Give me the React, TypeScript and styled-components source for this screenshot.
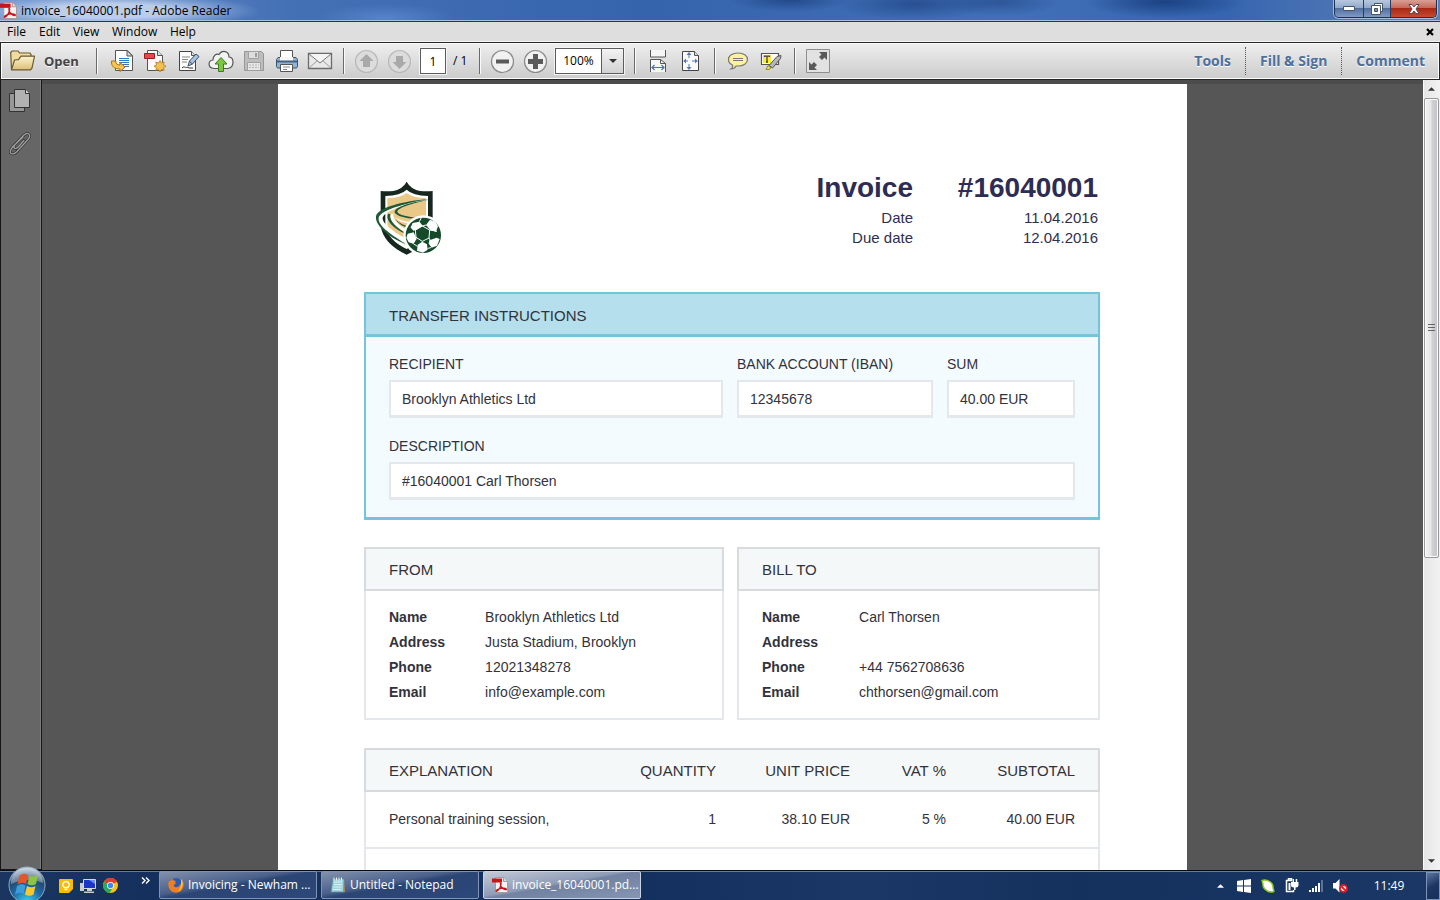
import React from "react";
import styled, { createGlobalStyle, css } from "styled-components";

const uiFont = `"Segoe UI", "Open Sans", "Noto Sans", sans-serif`;
const docFont = `"Liberation Sans", Arial, Helvetica, sans-serif`;

const GlobalStyle = createGlobalStyle`
  *, *::before, *::after { box-sizing: border-box; }
  body { margin: 0; background: #565656; }
  button, input { font: inherit; color: inherit; margin: 0; }
  button { padding: 0; border: 0; background: none; cursor: default; }
  svg { display: block; flex: none; }
`;

/* ---------- window frame ---------- */

const Desktop = styled.div`
  display: flex;
  flex-direction: column;
  height: 100vh;
  overflow: hidden;
  font: 12px/16px ${uiFont};
  color: #000;
`;

const TitleBar = styled.header`
  display: flex;
  align-items: flex-start;
  flex: none;
  height: 22px;
  padding-right: 3px;
  border-bottom: 1px solid #1f3660;
  box-shadow: inset 0 -1px #a9bfe2;
  background:
    radial-gradient(ellipse 150px 18px at 110px 11px, rgba(205, 218, 240, 0.85) 40%, rgba(150, 180, 225, 0.5) 75%, transparent),
    radial-gradient(ellipse 70px 14px at 385px 18px, rgba(95, 140, 210, 0.7), transparent),
    radial-gradient(ellipse 60px 12px at 790px 0, rgba(25, 60, 120, 0.7), transparent),
    radial-gradient(ellipse 80px 16px at 915px 4px, rgba(25, 60, 120, 0.6), transparent),
    radial-gradient(ellipse 60px 14px at 1000px 2px, rgba(25, 60, 120, 0.5), transparent),
    radial-gradient(ellipse 80px 16px at 1165px 2px, rgba(15, 50, 110, 0.7), transparent),
    linear-gradient(90deg, #6f93cd, #4470b5 20%, #3564ad 45%, #4170b8 70%, #3565b0 85%, #5f80b5);
`;

const WindowTitle = styled.h1`
  display: flex;
  align-items: center;
  gap: 4px;
  flex: 1;
  height: 21px;
  margin: 0;
  font-size: 12px;
  font-weight: 400;
`;

const Caption = styled.div`
  display: flex;
  height: 18px;
  border: 1px solid #1f2f4f;
  border-top: 0;
  border-radius: 0 0 5px 5px;
  box-shadow: 0 0 0 1px rgba(210, 225, 245, 0.65);
  overflow: hidden;
`;

const CaptionButton = styled.button<{ $w: number; $close?: boolean }>`
  display: flex;
  align-items: center;
  justify-content: center;
  width: ${(p) => p.$w}px;
  background: ${(p) =>
    p.$close
      ? "linear-gradient(#d9a095, #c56a58 45%, #a82a15 50%, #c8492f)"
      : "linear-gradient(#b8c8df, #93a9cb 45%, #53709f 50%, #7f9ac5)"};
  & + & { border-left: 1px solid #2b3c5e; }
`;

const MenuBar = styled.nav`
  display: flex;
  align-items: center;
  flex: none;
  height: 20px;
  padding-right: 6px;
  background: #dedede;
  border-bottom: 1px solid #f6f6f6;
`;

const MenuItem = styled.button<{ $w: number }>`
  width: ${(p) => p.$w}px;
  height: 19px;
  padding-left: 7px;
  text-align: left;
`;

const CloseDocument = styled.button`
  margin-left: auto;
`;

/* ---------- toolbar ---------- */

const Toolbar = styled.div`
  display: flex;
  align-items: center;
  flex: none;
  height: 38px;
  border: 1px solid #262626;
  box-shadow: inset 0 0 0 1px #fbfbfb;
  background: linear-gradient(#efefef, #cbcbcb);
`;

const OpenButton = styled.button`
  display: flex;
  align-items: center;
  gap: 8px;
  width: 88px;
  height: 34px;
  padding-left: 9px;
  font: 700 13px/16px "Open Sans", sans-serif;
  color: #444;
  text-shadow: 0 1px #fff;
`;

const Separator = styled.span`
  width: 2px;
  height: 26px;
  margin: 0 5px 0 7px;
  background: linear-gradient(90deg, #6a6a6a 50%, #fafafa 50%);
`;

const Tools = styled.div<{ $lead?: number }>`
  display: flex;
  align-items: center;
  padding-left: ${(p) => p.$lead ?? 0}px;
`;

const Tool = styled.button`
  display: flex;
  align-items: center;
  justify-content: center;
  width: 33px;
  height: 34px;
`;

const PageNumber = styled.input`
  width: 26px;
  height: 26px;
  margin-left: 4px;
  padding: 0;
  border: 1px solid #5c5c5c;
  box-shadow: 0 0 0 1px #f4f4f4;
  background: #fff;
  text-align: center;
`;

const PageCount = styled.span`
  width: 26px;
  padding-left: 7px;
  white-space: pre;
`;

const ZoomBox = styled.div`
  display: flex;
  width: 69px;
  height: 26px;
  margin: 0 3px;
  border: 1px solid #5c5c5c;
  box-shadow: 0 0 0 1px #f4f4f4;
  background: #fff;
`;

const ZoomValue = styled.input`
  flex: 1;
  min-width: 0;
  padding: 0;
  border: 0;
  background: none;
  text-align: center;
`;

const ZoomArrow = styled.button`
  display: flex;
  align-items: center;
  justify-content: center;
  width: 22px;
  border-left: 1px solid #5c5c5c;
  background: linear-gradient(#f3f3f3, #d2d2d2);
`;

const Panes = styled.div`
  display: flex;
  margin-left: auto;
`;

const PaneButton = styled.button`
  height: 28px;
  padding: 0 14px;
  font: 700 14px/18px "Open Sans", sans-serif;
  color: #4f6f9c;
  text-shadow: 0 1px #fff;
  white-space: nowrap;
  & + & { border-left: 1px dotted #555; }
`;

/* ---------- document area ---------- */

const Workspace = styled.div`
  display: flex;
  flex: 1;
  min-height: 0;
  background: #565656;
`;

const NavStrip = styled.aside`
  display: flex;
  flex-direction: column;
  align-items: center;
  gap: 18px;
  flex: none;
  width: 42px;
  padding: 8px 2px 0 0;
  border: solid #161616;
  border-width: 0 1px 1px 1px;
  background: #666;
  box-shadow: inset -1px 0 #7c7c7c;
`;

const DocumentView = styled.main`
  flex: 1;
  min-width: 0;
  padding-top: 4px;
  overflow: hidden;
  box-shadow: inset 0 4px #4c4c4c;
`;

const Page = styled.article`
  display: flex;
  flex-direction: column;
  width: 100%;
  max-width: 909px;
  min-height: 1286px;
  margin: 0 auto;
  padding: 84px 87px 84px 86px;
  background: #fff;
  font: 14px/16px ${docFont};
  color: #32323c;
`;

const Letterhead = styled.header`
  display: flex;
  justify-content: space-between;
  height: 124px;
  padding-right: 2px;
`;

const Summary = styled.dl`
  display: grid;
  grid-template-columns: auto 185px;
  grid-template-rows: 40px 20px 20px;
  align-items: center;
  align-self: flex-start;
  margin: 0;
  font-size: 15px;
  line-height: 20px;
  text-align: right;
  color: #30304c;
  dd { margin: 0; }
`;

const SummaryTitle = styled.dt`
  font-size: 28px;
  font-weight: 700;
  line-height: 40px;
  color: #2c2c54;
`;

const SummaryNumber = styled(SummaryTitle).attrs({ as: "dd" })``;

const sectionTitle = css`
  margin: 0;
  font-size: 15px;
  font-weight: 400;
  line-height: 20px;
`;

const Transfer = styled.section`
  border: 2px solid #74c4da;
  border-bottom-width: 3px;
  background: #f4fbff;
`;

const TransferTitle = styled.h2`
  ${sectionTitle}
  padding: 12px 23px 8px;
  border-bottom: 3px solid #74c4da;
  background: #b5dfec;
`;

const TransferForm = styled.form`
  display: grid;
  grid-template-columns: minmax(0, 334fr) minmax(0, 196fr) minmax(0, 128fr);
  gap: 20px 14px;
  padding: 19px 23px 17px;
`;

const Field = styled.label<{ $wide?: boolean }>`
  display: flex;
  flex-direction: column;
  gap: 8px;
  ${(p) => p.$wide && "grid-column: 1 / -1;"}
`;

const FieldValue = styled.input`
  width: 100%;
  height: 38px;
  padding: 0 11px;
  border: 2px solid #e4e8ec;
  border-bottom-width: 3px;
  background: #fff;
`;

const Parties = styled.div`
  display: grid;
  grid-template-columns: minmax(0, 360fr) minmax(0, 363fr);
  gap: 13px;
  margin: 27px 0 28px;
`;

const Card = styled.section`
  border: 2px solid #e4e7ec;
  border-top: 0;
`;

const CardTitle = styled.h2`
  ${sectionTitle}
  margin: 0 -2px;
  padding: 11px 23px 9px;
  border: 2px solid #d8dbde;
  background: #f5f8f9;
`;

const Details = styled.dl`
  display: grid;
  grid-template-columns: 31% 1fr;
  grid-auto-rows: 25px;
  margin: 0;
  padding: 14px 23px 13px;
  line-height: 25px;
  dt { font-weight: 700; }
  dd { margin: 0; }
`;

const Items = styled.table`
  width: 100%;
  border-collapse: separate;
  border-spacing: 0;
  table-layout: fixed;
`;

const HeadCell = styled.th<{ $w?: number }>`
  width: ${(p) => (p.$w ? p.$w + "px" : "auto")};
  height: 44px;
  padding: 2px 0 0;
  border: solid #d8dbde;
  border-width: 2px 0;
  background: #f5f8f9;
  font-size: 15px;
  font-weight: 400;
  text-align: right;
  &:first-child { padding-left: 23px; border-left-width: 2px; text-align: left; }
  &:last-child { padding-right: 23px; border-right-width: 2px; }
`;

const Cell = styled.td`
  height: 57px;
  padding: 0 0 2px;
  border: solid #e4e7ec;
  border-width: 0 0 2px;
  text-align: right;
  &:first-child { padding-left: 23px; border-left-width: 2px; text-align: left; }
  &:last-child { padding-right: 23px; border-right-width: 2px; }
`;

const ScrollBar = styled.div`
  display: flex;
  flex-direction: column;
  flex: none;
  width: 17px;
  padding-right: 1px;
  border-left: 1px solid #fafafa;
  background: linear-gradient(90deg, #e6e6e6, #f2f2f2);
`;

const ScrollArrow = styled.button`
  display: flex;
  align-items: center;
  justify-content: center;
  height: 18px;
`;

const ScrollTrack = styled.div`
  flex: 1;
`;

const ScrollThumb = styled.div`
  display: flex;
  align-items: center;
  justify-content: center;
  height: 61%;
  border: 1px solid #979797;
  border-radius: 2px;
  box-shadow: inset 0 0 0 1px #fbfbfb;
  background: linear-gradient(90deg, #f3f3f3, #e6e6e8 45%, #d0d0d4 55%, #c4c4c8);
`;

/* ---------- taskbar ---------- */

const TaskBar = styled.footer`
  display: flex;
  flex: none;
  height: 30px;
  border-top: 1px solid #050a14;
  box-shadow: inset 0 1px #5f7ca8;
  background: linear-gradient(90deg, #1a3560, #15305c 10%, #14305f 45%, #1b3765 60%, #14305d 75%, #1b3765);
  color: #fff;
`;

const StartButton = styled.button`
  position: relative;
  width: 54px;
  svg { position: absolute; left: 8px; bottom: -4px; }
`;

const QuickLaunch = styled.div`
  display: flex;
  align-items: center;
  gap: 7px;
  width: 105px;
  padding-left: 5px;
`;

const Overflow = styled.button`
  align-self: flex-start;
  margin: 6px 9px 0 auto;
`;

const TaskList = styled.div`
  display: flex;
  gap: 4px;
`;

const TaskButton = styled.button<{ $active?: boolean }>`
  display: flex;
  align-items: center;
  gap: 4px;
  width: 158px;
  height: 28px;
  padding-left: 8px;
  border: 1px solid ${(p) => (p.$active ? "#c8d2e2" : "#8094b6")};
  border-radius: 2px;
  background: ${(p) =>
    p.$active
      ? "linear-gradient(170deg, #c3cad7, #8e9cb6 45%, #7182a2 50%, #8595b2)"
      : "linear-gradient(170deg, #8291ac, #4a608a 42%, #2b4574 50%, #2c4879)"};
  white-space: nowrap;
`;

const Tray = styled.div`
  display: flex;
  align-items: center;
  margin-left: auto;
`;

const TrayButton = styled.button`
  display: flex;
  align-items: center;
  justify-content: center;
  width: 24px;
  height: 28px;
`;

const Clock = styled.time`
  width: 74px;
  text-align: center;
`;

const ShowDesktop = styled.button`
  width: 14px;
  height: 28px;
  border: 1px solid #7e93b8;
  background: linear-gradient(150deg, #5d77a0, #1d3763 50%, #15305c);
`;

/* ---------- icons ---------- */

const PdfIcon = ({ size = 16 }: { size?: number }) => (
  <svg width={size} height={size} viewBox="0 0 16 16" aria-hidden="true">
    <path d="M3.500.5h8l4 4v11h-12z" fill="#f7f3f3" stroke="#a79a9a" />
    <path d="M11.500.5v4h4" fill="#ddd" stroke="#a79a9a" />
    <path d="M0 1.500h10v4H0z" fill="#c4161c" />
    <path d="M8.500 6c1 0 .5 3-1 5.500S4 15 4 14c0-1.200 4-2.800 7.500-2.800 3 0 3.500 1.300 2.300 1.500-1.500.2-5-2.200-5.300-5z" fill="none" stroke="#c4161c" strokeWidth="1.300" />
  </svg>
);

const FolderIcon = () => (
  <svg width="26" height="22" viewBox="0 0 26 22" aria-hidden="true">
    <defs>
      <linearGradient id="folder" x1="0" y1="0" x2="0" y2="1">
        <stop offset="0" stopColor="#fdf3cd" />
        <stop offset="1" stopColor="#dcbf77" />
      </linearGradient>
    </defs>
    <path d="M1.500 19.500l-.8-17 1.300-1.500h6l1.600 2H20l1 1.500V7" fill="#f0dca0" stroke="#6b5a33" strokeWidth="1.200" />
    <path d="M1.500 19.800L4.500 10l4-.3L11 6.200h13.500L22 18l-1.500 1.800z" fill="url(#folder)" stroke="#6b5a33" strokeWidth="1.200" strokeLinejoin="round" />
  </svg>
);

const ConvertIcon = () => (
  <svg width="24" height="24" viewBox="0 0 24 24" aria-hidden="true">
    <path d="M5.500 1.500h12l5 5v15h-17z" fill="#fdfdfd" stroke="#555" />
    <path d="M17 1.500V7h5.500z" fill="#d8d8d8" stroke="#555" />
    <path d="M9 9.500h10M9 11.500h10M9 13.500h10M12 15.500h7M12 17.500h7" stroke="#2c7bd0" />
    <path d="M1.500 12h4.500c-.5 2.500 1 4 4 4v-2.500l5 4.500-5 4.500V20C4 20 1 17 1.500 12z" fill="#f5c452" stroke="#a3701b" strokeLinejoin="round" />
  </svg>
);

const CreateIcon = () => (
  <svg width="24" height="24" viewBox="0 0 24 24" aria-hidden="true">
    <path d="M4.500 1.500h10l5 5v15h-15z" fill="#fbfbfb" stroke="#555" />
    <path d="M14.500 1.500v5h5" fill="#ddd" stroke="#555" />
    <path d="M1.500 4.500h10v5h-10z" fill="#e4474b" stroke="#a01820" />
    <path d="M17 11.500l1.400 2.500 2.800-.9-.8 2.700 2.600 1.400-2.600 1.400.8 2.700-2.800-.9L17 23l-1.400-2.600-2.800.9.8-2.700-2.600-1.400 2.600-1.400-.8-2.700 2.800.9z" fill="#f4c04e" stroke="#b98124" strokeWidth=".9" />
  </svg>
);

const SignIcon = () => (
  <svg width="24" height="24" viewBox="0 0 24 24" aria-hidden="true">
    <path d="M3.500 2.500h12l4 4v15h-16z" fill="#fcfcfc" stroke="#444" />
    <path d="M15.500 2.500v4h4" fill="#ddd" stroke="#555" />
    <path d="M6 8h8M6 10.500h6M6 13h5" stroke="#888" />
    <path d="M6 19c3-3 3 1 5-1l2 1h4" stroke="#333" fill="none" />
    <path d="M12 17l1.500-5 6.500-7 3 2.500-6.500 7.500z" fill="#a9c2df" stroke="#3f5166" strokeLinejoin="round" />
    <path d="M13.500 12.500l3 2.500" stroke="#3f5166" />
  </svg>
);

const CloudIcon = () => (
  <svg width="26" height="24" viewBox="0 0 26 24" aria-hidden="true">
    <path d="M6 19.500C-.5 19-.3 11.500 5 11c0-4.500 3-6.500 6-5.500 3-5 10-3.500 10 2.500 5.500.5 5.500 10.500-1 11.500z" fill="#f2f2f2" stroke="#555" strokeWidth="1.200" />
    <path d="M13 8.500l6 6.500h-3.500v7.500h-5V15H7z" fill="#7cc642" stroke="#3f7d1c" strokeLinejoin="round" />
  </svg>
);

const SaveIcon = () => (
  <svg width="22" height="22" viewBox="0 0 22 22" aria-hidden="true">
    <path d="M1.500 1.500h17l2 2v17h-19z" fill="#bdbdbd" stroke="#969696" />
    <path d="M5.500 1.500h10v7h-10z" fill="#dedede" stroke="#a0a0a0" />
    <path d="M12 3h2v4h-2z" fill="#9d9d9d" />
    <path d="M4.500 12.500h13v8h-13z" fill="#e6e6e6" stroke="#a0a0a0" />
    <path d="M6 15h10M6 17.500h10" stroke="#b5b5b5" strokeDasharray="2 1" />
  </svg>
);

const PrintIcon = () => (
  <svg width="24" height="24" viewBox="0 0 24 24" aria-hidden="true">
    <path d="M5.500 1.500h12v10h-12z" fill="#fff" stroke="#555" />
    <path d="M3 8.500h18l1.500 2v7l-1 1.500h-19l-1-1.500v-7z" fill="#8fb4d6" stroke="#3f5366" />
    <path d="M5 8h13v4H5z" fill="#f6f6f6" />
    <path d="M2 12.500h20" stroke="#466280" strokeWidth="2" />
    <path d="M5.500 15.500h12v7h-12z" fill="#fff" stroke="#555" />
    <path d="M8 18h7M8 20.500h4" stroke="#888" />
  </svg>
);

const MailIcon = () => (
  <svg width="26" height="20" viewBox="0 0 26 20" aria-hidden="true">
    <path d="M1.500 2.500h23v15h-23z" fill="#e9e9e9" stroke="#6c6c6c" strokeWidth="1.300" />
    <path d="M2 17l8.500-7.500M24 17l-8.500-7.500" stroke="#9a9a9a" />
    <path d="M2 3l11 9L24 3" fill="#f4f4f4" stroke="#777" />
  </svg>
);

const RoundIcon = ({ d, dim }: { d: string; dim?: boolean }) => (
  <svg width="25" height="25" viewBox="0 0 25 25" aria-hidden="true">
    <circle cx="12.500" cy="12.500" r="11" fill={dim ? "#dcdcdc" : "#f1f1f1"} stroke={dim ? "#b9b9b9" : "#8a8a8a"} strokeWidth="1.200" />
    <path d={d} fill={dim ? "#a9a9a9" : "#5a5a5a"} />
  </svg>
);

const FitWidthIcon = () => (
  <svg width="18" height="22" viewBox="0 0 18 22" aria-hidden="true">
    <path d="M1.500 0v7h15V0" fill="#f6f6f6" stroke="#555" />
    <path d="M1.500 22V9.500h10l5 4V22" fill="#f8f8f8" stroke="#555" />
    <path d="M11.500 9.500v4h5" fill="none" stroke="#555" />
    <path d="M3 17.500h12M5.500 15L3 17.500 5.500 20M12.500 15l2.500 2.500-2.500 2.500" fill="none" stroke="#4c6fb5" strokeWidth="1.200" />
  </svg>
);

const FitPageIcon = () => (
  <svg width="19" height="22" viewBox="0 0 19 22" aria-hidden="true">
    <path d="M1.500 1.500h12l4 4v15h-16z" fill="#fafafa" stroke="#444" />
    <path d="M13.500 1.500v4h4" fill="#ddd" stroke="#555" />
    <path d="M8 3v5M8 14v5M3 11h4M11 11h5" stroke="#5577bb" />
    <path d="M5.500 5L8 2l2.500 3zM5.500 17L8 20l2.500-3zM5 8.500L2.200 11 5 13.500zM14 8.500l2.800 2.500-2.800 2.500z" fill="#5577bb" />
  </svg>
);

const CommentIcon = () => (
  <svg width="22" height="20" viewBox="0 0 22 20" aria-hidden="true">
    <path d="M11 2c5.500 0 9.500 2.700 9.500 6.500S16.500 15 11 15H9c-1 2-2.500 3-5 3 1.500-1 2-2.500 1.500-4C3 13 1.500 11 1.500 8.500 1.500 4.700 5.500 2 11 2z" fill="#fbf39a" stroke="#777" strokeWidth="1.200" />
    <path d="M6 7.500h10M6 9.500h10" stroke="#777" />
  </svg>
);

const HighlightIcon = () => (
  <svg width="22" height="20" viewBox="0 0 22 20" aria-hidden="true">
    <path d="M1.500 2.500h17v11h-17z" fill="#fff" stroke="#555" strokeWidth="1.200" />
    <path d="M3 4h8v8H3z" fill="#fbee2c" />
    <path d="M4.500 6V5.200h5V6M7 5.200V11M6 11h2" fill="none" stroke="#444" strokeWidth="1.300" />
    <path d="M9 14.500l8-9 4-1-.5 3-8 9.500z" fill="#b6b6b6" stroke="#555" />
    <path d="M6 18.500l2-4 3 2.500-2 1.500z" fill="#e9df4a" stroke="#857d22" strokeWidth=".8" />
  </svg>
);

const FullScreenIcon = () => (
  <svg width="24" height="24" viewBox="0 0 24 24" aria-hidden="true">
    <path d="M.5.5h23v23H.5z" fill="#e2e2e2" stroke="#8e8e8e" />
    <path d="M21 3v8l-2.500-2.500-2.500 2.500-3-3 2.500-2.500L13 3zM3 21v-8l2.500 2.500 2.500-2.500 3 3-2.500 2.500L11 21z" fill="#5a5a5a" />
  </svg>
);

const PagesIcon = () => (
  <svg width="24" height="25" viewBox="0 0 24 25" aria-hidden="true">
    <path d="M1.500 5.500h15v18h-15z" fill="#989898" stroke="#333" />
    <path d="M6.500 1.500h11l4 4v14h-15z" fill="#b2b2b2" stroke="#333" />
    <path d="M17.500 1.500v4h4" fill="#ddd" stroke="#333" />
  </svg>
);

const clipPath =
  "M15 6L5 15.500c-2 2.500-3.500 5-2.500 6.500s4 1 6-1L20 8.500c2-2.500 2-4.500.8-5.500s-3.300-.5-5.300 1.500L8 12.500c-2 2-2.500 4-1.500 4.800s2.500 0 4-1.500L16 9.500";

const ClipIcon = () => (
  <svg width="24" height="25" viewBox="0 0 24 25" aria-hidden="true" fill="none" strokeLinecap="round">
    <path d={clipPath} stroke="#2e2e2e" strokeWidth="2.600" />
    <path d={clipPath} stroke="#a2a2a2" strokeWidth="1.300" />
  </svg>
);

const Triangle = ({ up, w = 8, fill = "#333" }: { up?: boolean; w?: number; fill?: string }) => (
  <svg width={w} height="4" viewBox="0 0 8 4" aria-hidden="true">
    <path d={up ? "M0 4l4-4 4 4z" : "M0 0h8L4 4z"} fill={fill} />
  </svg>
);

const ClubLogo = () => (
  <svg width="88" height="88" viewBox="12 9 264 264" role="img" aria-label="Brooklyn Athletics crest">
    <path d="M140 50Q128 72 100 78 80 80 62 78V180Q68 236 140 269 212 236 218 180V78Q200 80 180 78 152 72 140 50Z" fill="#17271f" />
    <path d="M140 74Q122 92 76 93V180Q84 226 140 252 196 226 204 180V93Q158 92 140 74Z" fill="#fff" />
    <path d="M140 84Q122 99 82 100V178Q90 220 140 242 190 220 198 178V100Q158 99 140 84Z" fill="#eac888" />
    <path d="M205 104C150 108 60 125 50 152 42 178 100 225 142 240L140 222C104 202 66 176 68 158 74 136 140 116 205 104Z" fill="#fff" />
    <path d="M208 102C130 108 52 128 48 154 44 184 96 224 140 238 100 212 52 184 56 158 62 136 130 116 208 102Z" fill="#1d5a35" />
    <path d="M84 146C74 168 108 196 142 208 112 190 86 168 92 148Z" fill="#1d5a35" />
    <path d="M92 148C86 168 112 190 142 204L144 196C116 182 98 164 100 146Z" fill="#fff" />
    <path d="M206 104C150 112 102 126 104 142 110 156 150 164 184 160 146 156 114 150 112 140 112 128 160 114 206 104Z" fill="#1d5a35" />
    <path d="M106 162Q122 180 152 186L148 190Q118 182 106 162Z" fill="#1d5a35" />
    <path d="M104 156Q124 170 160 172L154 176Q120 174 104 156Z" fill="#fff" />
    <circle cx="190" cy="211" r="60" fill="#fff" />
    <circle cx="190" cy="211" r="53" fill="#14492a" />
    <g fill="#fff">
      <path d="M158 174l20-4 11 13-21 12-8 2-8-10z" />
      <path d="M198 180l12-16 16 6 8 14-6 16-18-6z" />
      <path d="M208 226l22-8 9 4-8 20-16 6-9-12z" />
      <path d="M187 230l14 8 2 16-14 9-18-6 2-18z" />
      <path d="M143 206l18-4 9 20-10 14-14-4-7-14z" />
    </g>
    <g fill="none" stroke="#fff" strokeWidth="3">
      <path d="M187 183l-21 12 2 22 19 12 20-10 2-24zM166 195l-14-8M168 217l-8 18M187 229v4M207 219l4 8M209 195l22 4M187 183l11-3M160 236l12 8M203 250l10-2M178 170l6-12" />
    </g>
  </svg>
);

const StartOrb = () => (
  <svg width="38" height="38" viewBox="0 0 38 38" aria-hidden="true">
    <defs>
      <radialGradient id="orb" cx=".5" cy="1" r=".95">
        <stop offset="0" stopColor="#3fd6f5" />
        <stop offset=".45" stopColor="#1f6aa5" />
        <stop offset=".75" stopColor="#24486f" />
        <stop offset="1" stopColor="#a9bccd" />
      </radialGradient>
    </defs>
    <circle cx="19" cy="19" r="18" fill="url(#orb)" stroke="#8da9c4" />
    <path d="M3 18A16 16 0 0135 17Q19 10 3 18z" fill="#fff" opacity=".35" />
    <path d="M11.500 9.500q4.500-3 8.500-.5l-2 9q-4-2.500-8.500.5z" fill="#e4562a" />
    <path d="M21.500 9.500q4.500 2 8.500-.5l-2 9q-4 2.500-8.500 0z" fill="#8cc640" />
    <path d="M9 20q4.500-3 8.500-.5l-2 8.500q-4-2.500-8.500.5z" fill="#3f9be0" />
    <path d="M19 20q4.500 2.500 8.500 0l-2 8.500q-4 2.500-8.500 0z" fill="#fbc72c" />
  </svg>
);

const KeepIcon = () => (
  <svg width="14" height="14" viewBox="0 0 14 14" aria-hidden="true">
    <path d="M1 0h12a1 1 0 011 1v9l-4 4H1a1 1 0 01-1-1V1a1 1 0 011-1z" fill="#fbbc05" />
    <path d="M5.300 8.500C2.500 6.500 4 2.500 7 2.500s4.500 4 1.700 6zM5.500 10.500h3" fill="none" stroke="#fff" strokeWidth="1.300" />
  </svg>
);

const ComputerIcon = () => (
  <svg width="16" height="16" viewBox="0 0 16 16" aria-hidden="true">
    <path d="M0 5h4v8H0z" fill="#c9ccd2" />
    <path d="M3.500 1.500h12v9h-12z" fill="#1b35c8" stroke="#d5d8de" />
    <path d="M9 2h6v4z" fill="#6d8df0" />
    <path d="M7 11h5v2H7zM4 13.500h10V15H4z" fill="#c9ccd2" />
  </svg>
);

const ChromeIcon = () => (
  <svg width="15" height="15" viewBox="0 0 16 16" aria-hidden="true">
    <circle cx="8" cy="8" r="8" fill="#fbc116" />
    <path d="M8 8L1.100 4A8 8 0 0115 4z" fill="#e33b2e" />
    <path d="M8 8L1.100 4A8 8 0 007 16l3.500-6z" fill="#2da94f" />
    <circle cx="8" cy="8" r="3.700" fill="#fff" />
    <circle cx="8" cy="8" r="2.900" fill="#4285f4" />
  </svg>
);

const FirefoxIcon = () => (
  <svg width="16" height="16" viewBox="0 0 16 16" aria-hidden="true">
    <circle cx="8" cy="7.500" r="6.500" fill="#2a5db0" />
    <path d="M1 4q-2 6 2 10 5 3.500 10 0 4-4 2-9.500-1-2-2.500-3 2 4-.5 6.500-2 3-5 2-2-1-1-2.500l2-.5-1-1.500 1-1.500Q5 4 4.500 2 3 3 2.500 4z" fill="#f0801f" />
    <path d="M13 2q3 4 1 8-1 3-4 4.500Q14 10 13 2z" fill="#fbc93a" />
  </svg>
);

const NotepadIcon = () => (
  <svg width="16" height="16" viewBox="0 0 16 16" aria-hidden="true">
    <path d="M3 2h11v13H1z" fill="#9fd3e0" stroke="#5c8f9c" strokeWidth=".8" />
    <path d="M14 3l1 12h-2z" fill="#b98a4a" />
    <path d="M4 5h8M4 7.500h8M3.500 10h8M3 12.500h8" stroke="#d9f0f5" />
    <path d="M4 .5v3M6.500.5v3M9 .5v3M11.500.5v3" stroke="#f1f1f1" />
  </svg>
);

const WindowsIcon = () => (
  <svg width="14" height="14" viewBox="0 0 14 14" aria-hidden="true">
    <path d="M0 2l6-.9v5.500H0zM7 1l7-1v6.600H7zM0 7.500h6V13l-6-.9zM7 7.500h7V14l-7-1z" fill="#fff" />
  </svg>
);

const LeafIcon = () => (
  <svg width="14" height="14" viewBox="0 0 14 14" aria-hidden="true">
    <path d="M1 1.500Q5 0 8.500 2.500 12.500 5 12 9l1 3.500Q8 14 5 11 1.500 8.500 2 5z" fill="#fff" stroke="#8ecb1d" strokeWidth="1.400" strokeLinejoin="round" />
  </svg>
);

const PowerIcon = () => (
  <svg width="14" height="15" viewBox="0 0 14 15" aria-hidden="true">
    <path d="M7 2.500H1.500v11h7V12M3.500 2V.8h3V2" fill="none" stroke="#fff" strokeWidth="1.500" />
    <path d="M3.500 5h2v7h-2z" fill="#fff" />
    <path d="M6 4h7.500v3q0 2.500-3 2.500v2.500H9V9.500Q6 9.500 6 7zM7.500 1H9v3H7.500zM10.700 1h1.500v3h-1.500z" fill="#fff" />
  </svg>
);

const SignalIcon = () => (
  <svg width="15" height="12" viewBox="0 0 15 12" aria-hidden="true">
    <path d="M0 10h2v2H0zM3 8h2v4H3zM6 6h2v6H6zM9 3h2v9H9z" fill="#fff" />
    <path d="M12 0h2v12h-2z" fill="#5d7299" />
  </svg>
);

const MutedIcon = () => (
  <svg width="15" height="14" viewBox="0 0 15 14" aria-hidden="true">
    <path d="M0 4h2.500L6.500 0v13.500l-4-4H0z" fill="#fff" />
    <circle cx="10.500" cy="9.500" r="3.500" fill="#fff" stroke="#e01b24" strokeWidth="1.800" />
    <path d="M8 7l5 5" stroke="#e01b24" strokeWidth="1.800" />
  </svg>
);

/* ---------- data ---------- */

const menus = [
  { label: "File", w: 32 },
  { label: "Edit", w: 34 },
  { label: "View", w: 39 },
  { label: "Window", w: 58 },
  { label: "Help", w: 40 },
];

const fileTools = [
  { label: "Convert", icon: <ConvertIcon /> },
  { label: "Create PDF", icon: <CreateIcon /> },
  { label: "Sign", icon: <SignIcon /> },
  { label: "Upload", icon: <CloudIcon /> },
  { label: "Save", icon: <SaveIcon /> },
  { label: "Print", icon: <PrintIcon /> },
  { label: "Email", icon: <MailIcon /> },
];

const parties = [
  {
    title: "FROM",
    rows: [
      ["Name", "Brooklyn Athletics Ltd"],
      ["Address", "Justa Stadium, Brooklyn"],
      ["Phone", "12021348278"],
      ["Email", "info@example.com"],
    ],
  },
  {
    title: "BILL TO",
    rows: [
      ["Name", "Carl Thorsen"],
      ["Address", ""],
      ["Phone", "+44 7562708636"],
      ["Email", "chthorsen@gmail.com"],
    ],
  },
];

const columns: { label: string; w?: number }[] = [
  { label: "EXPLANATION" },
  { label: "QUANTITY", w: 116 },
  { label: "UNIT PRICE", w: 134 },
  { label: "VAT %", w: 96 },
  { label: "SUBTOTAL", w: 154 },
];

const lines = [
  ["Personal training session,", "1", "38.10 EUR", "5 %", "40.00 EUR"],
  ["", "", "", "", ""],
];

/* ---------- sections ---------- */

const Invoice = () => (
  <Page>
    <Letterhead>
      <ClubLogo />
      <Summary>
        <SummaryTitle>Invoice</SummaryTitle>
        <SummaryNumber>#16040001</SummaryNumber>
        <dt>Date</dt>
        <dd>11.04.2016</dd>
        <dt>Due date</dt>
        <dd>12.04.2016</dd>
      </Summary>
    </Letterhead>

    <Transfer>
      <TransferTitle>TRANSFER INSTRUCTIONS</TransferTitle>
      <TransferForm>
        <Field>
          RECIPIENT
          <FieldValue readOnly value="Brooklyn Athletics Ltd" />
        </Field>
        <Field>
          BANK ACCOUNT (IBAN)
          <FieldValue readOnly value="12345678" />
        </Field>
        <Field>
          SUM
          <FieldValue readOnly value="40.00 EUR" />
        </Field>
        <Field $wide>
          DESCRIPTION
          <FieldValue readOnly value="#16040001 Carl Thorsen" />
        </Field>
      </TransferForm>
    </Transfer>

    <Parties>
      {parties.map((party) => (
        <Card key={party.title}>
          <CardTitle>{party.title}</CardTitle>
          <Details>
            {party.rows.map(([name, value]) => (
              <React.Fragment key={name}>
                <dt>{name}</dt>
                <dd>{value}</dd>
              </React.Fragment>
            ))}
          </Details>
        </Card>
      ))}
    </Parties>

    <Items>
      <thead>
        <tr>
          {columns.map((c) => (
            <HeadCell key={c.label} $w={c.w} scope="col">
              {c.label}
            </HeadCell>
          ))}
        </tr>
      </thead>
      <tbody>
        {lines.map((line, i) => (
          <tr key={i}>
            {line.map((value, j) => (
              <Cell key={j}>{value}</Cell>
            ))}
          </tr>
        ))}
      </tbody>
    </Items>
  </Page>
);

export default function App() {
  return (
    <Desktop>
      <GlobalStyle />
      <TitleBar>
        <WindowTitle>
          <PdfIcon size={17} />
          invoice_16040001.pdf - Adobe Reader
        </WindowTitle>
        <Caption>
          <CaptionButton $w={28} aria-label="Minimize">
            <svg width="12" height="5" viewBox="0 0 12 5">
              <path d="M.5.5h11v4H.5z" fill="#fff" stroke="#46536b" />
            </svg>
          </CaptionButton>
          <CaptionButton $w={27} aria-label="Restore">
            <svg width="12" height="12" viewBox="0 0 12 12">
              <path d="M3.500.5h8v8h-8z" fill="#fff" stroke="#46536b" />
              <path d="M.5 2.500h9v9h-9z" fill="#fff" stroke="#46536b" />
              <path d="M3.500 5.500h3v3h-3z" fill="#7d90b2" stroke="#46536b" />
            </svg>
          </CaptionButton>
          <CaptionButton $w={46} $close aria-label="Close">
            <svg width="12" height="10" viewBox="0 0 12 10">
              <path d="M1 .5h3l2 2.500L8 .5h3L8 5l3 4.500H8L6 7 4 9.500H1L4 5z" fill="#fff" stroke="#5b4650" />
            </svg>
          </CaptionButton>
        </Caption>
      </TitleBar>

      <MenuBar>
        {menus.map((m) => (
          <MenuItem key={m.label} $w={m.w}>
            {m.label}
          </MenuItem>
        ))}
        <CloseDocument aria-label="Close document">
          <svg width="8" height="8" viewBox="0 0 8 8">
            <path d="M1 1l6 6M7 1L1 7" stroke="#000" strokeWidth="2.200" />
          </svg>
        </CloseDocument>
      </MenuBar>

      <Toolbar>
        <OpenButton>
          <FolderIcon />
          Open
        </OpenButton>
        <Separator />
        <Tools $lead={2}>
          {fileTools.map((t) => (
            <Tool key={t.label} aria-label={t.label}>
              {t.icon}
            </Tool>
          ))}
        </Tools>
        <Separator />
        <Tools>
          <Tool aria-label="Previous page">
            <RoundIcon dim d="M12.500 5l7 7h-3.500v6h-7v-6H5.500z" />
          </Tool>
          <Tool aria-label="Next page">
            <RoundIcon dim d="M12.500 20l7-7h-3.500V7h-7v6H5.500z" />
          </Tool>
          <PageNumber aria-label="Page number" defaultValue="1" />
          <PageCount>/ 1</PageCount>
        </Tools>
        <Separator />
        <Tools>
          <Tool aria-label="Zoom out">
            <RoundIcon d="M6 10.500h13v4H6z" />
          </Tool>
          <Tool aria-label="Zoom in">
            <RoundIcon d="M10 5h5v5h5v5h-5v5h-5v-5H5v-5h5z" />
          </Tool>
          <ZoomBox>
            <ZoomValue aria-label="Zoom level" defaultValue="100%" />
            <ZoomArrow aria-label="Zoom options">
              <Triangle />
            </ZoomArrow>
          </ZoomBox>
        </Tools>
        <Separator />
        <Tools>
          <Tool aria-label="Fit width"><FitWidthIcon /></Tool>
          <Tool aria-label="Fit page"><FitPageIcon /></Tool>
        </Tools>
        <Separator />
        <Tools>
          <Tool aria-label="Add note"><CommentIcon /></Tool>
          <Tool aria-label="Highlight text"><HighlightIcon /></Tool>
        </Tools>
        <Separator />
        <Tool aria-label="Full screen"><FullScreenIcon /></Tool>
        <Panes>
          <PaneButton>Tools</PaneButton>
          <PaneButton>Fill &amp; Sign</PaneButton>
          <PaneButton>Comment</PaneButton>
        </Panes>
      </Toolbar>

      <Workspace>
        <NavStrip>
          <button aria-label="Page thumbnails"><PagesIcon /></button>
          <button aria-label="Attachments"><ClipIcon /></button>
        </NavStrip>
        <DocumentView>
          <Invoice />
        </DocumentView>
        <ScrollBar>
          <ScrollArrow aria-label="Scroll up"><Triangle up w={7} /></ScrollArrow>
          <ScrollTrack>
            <ScrollThumb>
              <svg width="8" height="8" viewBox="0 0 8 8" aria-hidden="true">
                <path d="M0 .5h7M0 3.500h7M0 6.500h7" stroke="#666" />
              </svg>
            </ScrollThumb>
          </ScrollTrack>
          <ScrollArrow aria-label="Scroll down"><Triangle w={7} /></ScrollArrow>
        </ScrollBar>
      </Workspace>

      <TaskBar>
        <StartButton aria-label="Start"><StartOrb /></StartButton>
        <QuickLaunch>
          <button aria-label="Keep"><KeepIcon /></button>
          <button aria-label="Computer"><ComputerIcon /></button>
          <button aria-label="Chrome"><ChromeIcon /></button>
          <Overflow aria-label="More">
            <svg width="9" height="7" viewBox="0 0 9 7">
              <path d="M1 .5l3 3-3 3M5 .5l3 3-3 3" fill="none" stroke="#fff" strokeWidth="1.400" />
            </svg>
          </Overflow>
        </QuickLaunch>
        <TaskList>
          <TaskButton><FirefoxIcon />Invoicing - Newham ...</TaskButton>
          <TaskButton><NotepadIcon />Untitled - Notepad</TaskButton>
          <TaskButton $active><PdfIcon />invoice_16040001.pd...</TaskButton>
        </TaskList>
        <Tray>
          <TrayButton aria-label="Show hidden icons"><Triangle up w={7} fill="#fff" /></TrayButton>
          <TrayButton aria-label="Windows update"><WindowsIcon /></TrayButton>
          <TrayButton aria-label="Security"><LeafIcon /></TrayButton>
          <TrayButton aria-label="Power"><PowerIcon /></TrayButton>
          <TrayButton aria-label="Network"><SignalIcon /></TrayButton>
          <TrayButton aria-label="Volume"><MutedIcon /></TrayButton>
          <Clock>11:49</Clock>
          <ShowDesktop aria-label="Show desktop" />
        </Tray>
      </TaskBar>
    </Desktop>
  );
}
